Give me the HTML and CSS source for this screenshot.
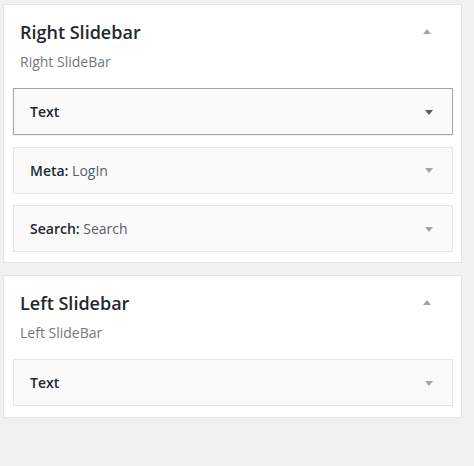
FILE: index.html
```html
<!DOCTYPE html>
<html lang="en">
<head>
<meta charset="utf-8">
<title>Sidebars</title>
<link rel="stylesheet" href="styles.css">
</head>
<body>
<main class="page">
  <section class="panel">
    <header class="panel-head">
      <div>
        <h2 class="panel-title">Right Slidebar</h2>
        <p class="panel-desc">Right SlideBar</p>
      </div>
      <svg class="arrow arrow-up" width="8" height="5" viewBox="0 0 8 5"><path d="M0 5 L4 0 L8 5 Z"/></svg>
    </header>
    <div class="widget widget-open">
      <span class="widget-name">Text</span>
      <svg class="arrow arrow-dark" width="8" height="5" viewBox="0 0 8 5"><path d="M0 0 L8 0 L4 5 Z"/></svg>
    </div>
    <div class="widget">
      <span class="widget-name">Meta:<span class="widget-sub"> LogIn</span></span>
      <svg class="arrow" width="8" height="5" viewBox="0 0 8 5"><path d="M0 0 L8 0 L4 5 Z"/></svg>
    </div>
    <div class="widget">
      <span class="widget-name">Search:<span class="widget-sub"> Search</span></span>
      <svg class="arrow" width="8" height="5" viewBox="0 0 8 5"><path d="M0 0 L8 0 L4 5 Z"/></svg>
    </div>
  </section>
  <section class="panel panel-last">
    <header class="panel-head">
      <div>
        <h2 class="panel-title">Left Slidebar</h2>
        <p class="panel-desc">Left SlideBar</p>
      </div>
      <svg class="arrow arrow-up" width="8" height="5" viewBox="0 0 8 5"><path d="M0 5 L4 0 L8 5 Z"/></svg>
    </header>
    <div class="widget">
      <span class="widget-name">Text</span>
      <svg class="arrow" width="8" height="5" viewBox="0 0 8 5"><path d="M0 0 L8 0 L4 5 Z"/></svg>
    </div>
  </section>
</main>
</body>
</html>
```
FILE: styles.css
```css
html, body {
  margin: 0;
  padding: 0;
  background: #f1f1f1;
  font-family: "Open Sans", "Noto Sans", "Liberation Sans", sans-serif;
  color: #23282d;
}

.page {
  display: flex;
  flex-direction: column;
  gap: 12px;
  padding: 4px 12px 0 3px;
  width: 459px;
}

.panel {
  background: #fff;
  border: 1px solid #e5e5e5;
  padding: 0 8px 10px 9px;
  display: flex;
  flex-direction: column;
  gap: 11.5px;
}

.panel-last {
  padding-bottom: 11px;
}

.panel-head {
  display: flex;
  justify-content: space-between;
  align-items: flex-start;
  padding: 15px 22px 4.5px 7px;
}

.panel-title {
  margin: 0;
  font-size: 18px;
  line-height: 24px;
  font-weight: 600;
  color: #23282d;
}

.panel-desc {
  margin: 8px 0 0;
  font-size: 14px;
  line-height: 20px;
  color: #72777c;
}

.arrow-up {
  margin-top: 9px;
}

.arrow path {
  fill: #a0a5aa;
}

.arrow-dark path {
  fill: #555d66;
}

.widget {
  display: flex;
  justify-content: space-between;
  align-items: center;
  background: #fafafa;
  border: 1px solid #e5e5e5;
  padding: 13px 19px 12px 16px;
  height: 20px;
}

.widget-open {
  border-color: #a0a5aa;
  box-shadow: 0 1px 1px rgba(0, 0, 0, 0.06);
}

.widget-name {
  font-size: 14px;
  line-height: 20px;
  font-weight: 600;
  color: #23282d;
}

.widget-sub {
  font-weight: 400;
  color: #555d66;
}
```
